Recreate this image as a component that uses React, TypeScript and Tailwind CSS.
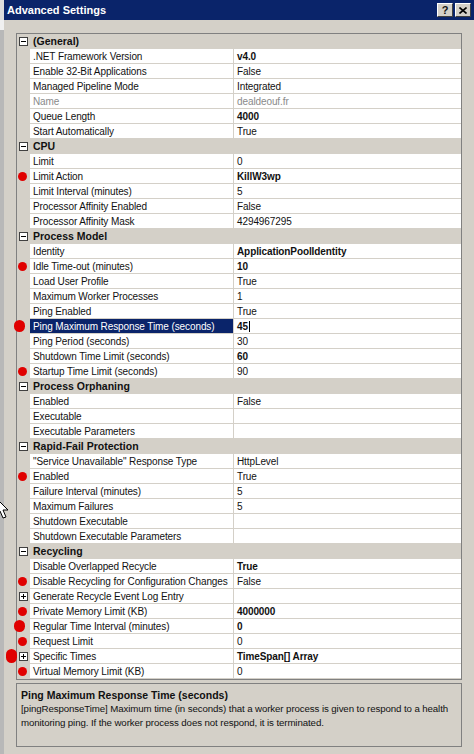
import React from 'react';

type Row =
  | { kind: 'cat'; label: string }
  | {
      kind: 'prop';
      label: string;
      value?: string;
      bold?: boolean;
      disabled?: boolean;
      selected?: boolean;
      expand?: boolean;
      dot?: 'sm' | 'lg' | 'out';
    };

const rows: Row[] = [
  { kind: 'cat', label: '(General)' },
  { kind: 'prop', label: '.NET Framework Version', value: 'v4.0', bold: true },
  { kind: 'prop', label: 'Enable 32-Bit Applications', value: 'False' },
  { kind: 'prop', label: 'Managed Pipeline Mode', value: 'Integrated' },
  { kind: 'prop', label: 'Name', value: 'dealdeouf.fr', disabled: true },
  { kind: 'prop', label: 'Queue Length', value: '4000', bold: true },
  { kind: 'prop', label: 'Start Automatically', value: 'True' },
  { kind: 'cat', label: 'CPU' },
  { kind: 'prop', label: 'Limit', value: '0' },
  { kind: 'prop', label: 'Limit Action', value: 'KillW3wp', bold: true, dot: 'sm' },
  { kind: 'prop', label: 'Limit Interval (minutes)', value: '5' },
  { kind: 'prop', label: 'Processor Affinity Enabled', value: 'False' },
  { kind: 'prop', label: 'Processor Affinity Mask', value: '4294967295' },
  { kind: 'cat', label: 'Process Model' },
  { kind: 'prop', label: 'Identity', value: 'ApplicationPoolIdentity', bold: true },
  { kind: 'prop', label: 'Idle Time-out (minutes)', value: '10', bold: true, dot: 'sm' },
  { kind: 'prop', label: 'Load User Profile', value: 'True' },
  { kind: 'prop', label: 'Maximum Worker Processes', value: '1' },
  { kind: 'prop', label: 'Ping Enabled', value: 'True' },
  { kind: 'prop', label: 'Ping Maximum Response Time (seconds)', value: '45', bold: true, selected: true, dot: 'lg' },
  { kind: 'prop', label: 'Ping Period (seconds)', value: '30' },
  { kind: 'prop', label: 'Shutdown Time Limit (seconds)', value: '60', bold: true },
  { kind: 'prop', label: 'Startup Time Limit (seconds)', value: '90', dot: 'sm' },
  { kind: 'cat', label: 'Process Orphaning' },
  { kind: 'prop', label: 'Enabled', value: 'False' },
  { kind: 'prop', label: 'Executable', value: '' },
  { kind: 'prop', label: 'Executable Parameters', value: '' },
  { kind: 'cat', label: 'Rapid-Fail Protection' },
  { kind: 'prop', label: '"Service Unavailable" Response Type', value: 'HttpLevel' },
  { kind: 'prop', label: 'Enabled', value: 'True', dot: 'sm' },
  { kind: 'prop', label: 'Failure Interval (minutes)', value: '5' },
  { kind: 'prop', label: 'Maximum Failures', value: '5' },
  { kind: 'prop', label: 'Shutdown Executable', value: '' },
  { kind: 'prop', label: 'Shutdown Executable Parameters', value: '' },
  { kind: 'cat', label: 'Recycling' },
  { kind: 'prop', label: 'Disable Overlapped Recycle', value: 'True', bold: true },
  { kind: 'prop', label: 'Disable Recycling for Configuration Changes', value: 'False', dot: 'sm' },
  { kind: 'prop', label: 'Generate Recycle Event Log Entry', value: '', expand: true },
  { kind: 'prop', label: 'Private Memory Limit (KB)', value: '4000000', bold: true, dot: 'sm' },
  { kind: 'prop', label: 'Regular Time Interval (minutes)', value: '0', bold: true, dot: 'lg' },
  { kind: 'prop', label: 'Request Limit', value: '0', dot: 'sm' },
  { kind: 'prop', label: 'Specific Times', value: 'TimeSpan[] Array', bold: true, expand: true, dot: 'out' },
  { kind: 'prop', label: 'Virtual Memory Limit (KB)', value: '0', dot: 'sm' },
];

function Box({ plus }: { plus?: boolean }) {
  return (
    <svg width="9" height="9" viewBox="0 0 9 9" className="block">
      <rect x="0.5" y="0.5" width="8" height="8" fill="#fff" stroke="#404040" />
      <line x1="2" y1="4.5" x2="7" y2="4.5" stroke="#000" />
      {plus && <line x1="4.5" y1="2" x2="4.5" y2="7" stroke="#000" />}
    </svg>
  );
}

function Dot({ size }: { size: 'sm' | 'lg' | 'out' }) {
  if (size === 'sm')
    return <span className="absolute left-[1px] top-[3px] w-[9px] h-[9px] rounded-full bg-[#e00000]" />;
  if (size === 'lg')
    return <span className="absolute left-[-3px] top-[1px] w-[11px] h-[12px] rounded-full bg-[#e00000]" />;
  return <span className="absolute left-[-11px] top-[0px] w-[11px] h-[14px] rounded-full bg-[#e00000]" />;
}

export default function App() {
  return (
    <div
      className="relative w-[474px] h-[754px] flex bg-[#d4d0c8] overflow-hidden text-[10px] tracking-[-0.1px] text-[#111]"
      style={{ fontFamily: '"Liberation Sans", Arial, sans-serif' }}
    >
      <div className="w-[4px] shrink-0 flex flex-col bg-[#c0c0c0]">
        <div className="h-[20px] bg-[#dcdcdc]" />
        <div className="h-[10px] bg-[#f0f0f0]" />
        <div className="flex-1 bg-[#b8b8b8]" />
      </div>

      <div className="flex-1 min-w-0 flex flex-col">
        {/* title bar */}
        <div className="h-[20px] bg-[#0a246a] flex items-center pl-[3px] pr-[3px]">
          <span className="flex-1 text-white font-bold text-[11px] tracking-normal">Advanced Settings</span>
          <div className="flex gap-[2px]">
            <div className="w-[16px] h-[14px] bg-[#d4d0c8] border border-t-white border-l-white border-r-[#404040] border-b-[#404040] flex items-center justify-center font-bold text-[11px] leading-none">
              ?
            </div>
            <div className="w-[16px] h-[14px] bg-[#d4d0c8] border border-t-white border-l-white border-r-[#404040] border-b-[#404040] flex items-center justify-center">
              <svg width="8" height="7" viewBox="0 0 8 7">
                <path d="M0.5 0.5 L7.5 6.5 M7.5 0.5 L0.5 6.5" stroke="#000" strokeWidth="1.6" />
              </svg>
            </div>
          </div>
        </div>

        <div className="flex-1 min-w-0 flex flex-col pt-[13px] pl-[12px] pr-[12px]">
          {/* property grid */}
          <div className="border border-[#808080] bg-[#d4d0c8] flex flex-col">
            {rows.map((r, i) =>
              r.kind === 'cat' ? (
                <div key={i} className="h-[15px] flex items-center">
                  <div className="w-[13px] flex justify-center">
                    <Box />
                  </div>
                  <span className="pl-[3px] font-bold text-[10.5px] tracking-normal">{r.label}</span>
                </div>
              ) : (
                <div key={i} className="h-[15px] flex">
                  <div className="relative w-[13px] shrink-0 flex items-center justify-center">
                    {r.expand && <Box plus />}
                    {r.dot && <Dot size={r.dot} />}
                  </div>
                  <div
                    className={`w-[204px] shrink-0 pl-[3px] flex items-center border-r border-b border-[#d4d0c8] whitespace-nowrap overflow-hidden ${
                      r.selected ? 'bg-[#0a246a] text-white' : 'bg-white'
                    } ${r.disabled ? 'text-[#8a8a8a]' : ''}`}
                  >
                    {r.label}
                  </div>
                  <div
                    className={`flex-1 min-w-0 pl-[3px] flex items-center bg-white border-b border-[#d4d0c8] whitespace-nowrap ${
                      r.bold ? 'font-bold' : ''
                    } ${r.disabled ? 'text-[#8a8a8a]' : ''}`}
                  >
                    {r.value}
                    {r.selected && <span className="ml-[1px] w-[1px] h-[11px] bg-black" />}
                  </div>
                </div>
              )
            )}
          </div>

          {/* description */}
          <div className="mt-[3px] h-[64px] border border-[#808080] bg-[#d4d0c8] px-[4px] pt-[4px] overflow-hidden">
            <div className="font-bold text-[10.5px] tracking-normal leading-[14px]">
              Ping Maximum Response Time (seconds)
            </div>
            <div className="leading-[14px] text-[9.7px] tracking-[-0.1px] whitespace-nowrap">
              [pingResponseTime] Maximum time (in seconds) that a worker process is given to respond to a health
              <br />
              monitoring ping. If the worker process does not respond, it is terminated.
            </div>
          </div>
        </div>
      </div>

      {/* mouse pointer */}
      <svg className="absolute left-[-5px] top-[497px]" width="16" height="24" viewBox="0 0 16 24">
        <path d="M1 1 L1 18 L5 14 L8 21 L11 20 L8 13 L13 13 Z" fill="#fff" stroke="#000" strokeWidth="1" />
      </svg>
    </div>
  );
}
